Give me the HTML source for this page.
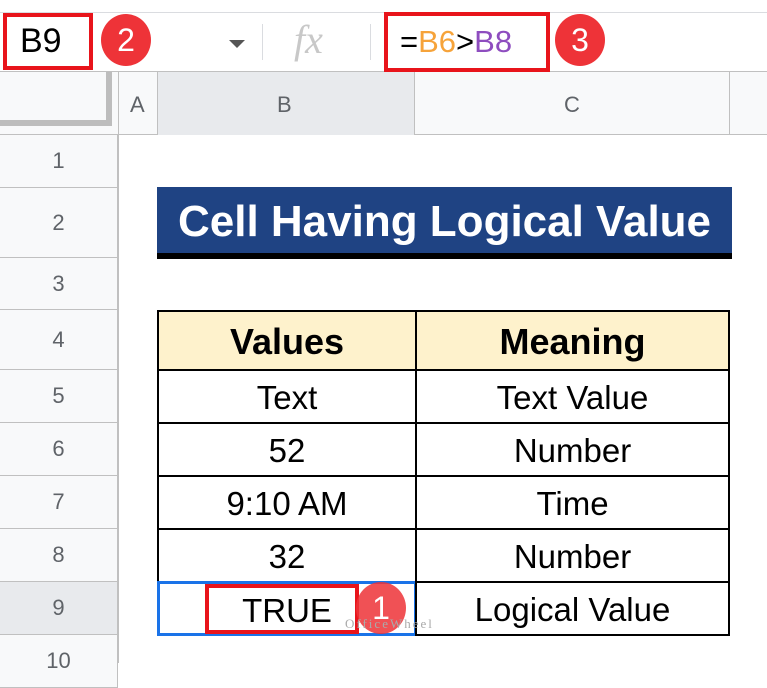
<!DOCTYPE html>
<html><head><style>
*{margin:0;padding:0;box-sizing:border-box}
body{width:767px;height:663px;background:#fff;position:relative;overflow:hidden;font-family:"Liberation Sans",Arial,sans-serif}
.a{position:absolute}
.rn{position:absolute;left:0;width:118px;background:#f8f9fa;border-bottom:1px solid #c0c0c0;border-right:1px solid #c0c0c0;text-align:center;color:#5f6368;font-size:22px}
.cell{position:absolute;border:2px solid #000;text-align:center;font-size:33px;color:#000;white-space:nowrap}
.badge{position:absolute;width:50px;height:52px;border-radius:50%;background:#ee3338;color:#fff;font-size:32px;text-align:center;line-height:52px}
</style></head><body>
<div class="a" style="left:0;top:12px;width:767px;height:1px;background:#dadce0"></div>
<div class="a" style="left:0;top:71px;width:767px;height:1px;background:#c0c0c0"></div>
<div class="a" style="left:3px;top:13px;width:90px;height:57px;border:4px solid #e8141b"></div>
<div class="a" style="left:20px;top:22px;font-size:34px;color:#000">B9</div>
<div class="badge" style="left:101px;top:14px">2</div>
<div class="a" style="left:229px;top:40px;width:0;height:0;border-left:8px solid transparent;border-right:8px solid transparent;border-top:8px solid #555"></div>
<div class="a" style="left:262px;top:24px;width:1px;height:36px;background:#dadce0"></div>
<div class="a" style="left:294px;top:16px;font-size:40px;color:#c8c8c8;font-family:'Liberation Serif',serif;font-style:italic">fx</div>
<div class="a" style="left:370px;top:24px;width:1px;height:36px;background:#dadce0"></div>
<div class="a" style="left:384px;top:12px;width:166px;height:60px;border:4px solid #e8141b"></div>
<div class="a" style="left:400px;top:24px;font-size:31px"><span style="color:#000">=</span><span style="color:#f6a33a">B6</span><span>&gt;</span><span style="color:#8e4dbf">B8</span></div>
<div class="badge" style="left:555px;top:14px">3</div>
<div class="a" style="left:0;top:72px;width:767px;height:63px;background:#f8f9fa;border-bottom:1px solid #c0c0c0"></div>
<div class="a" style="left:0;top:72px;width:112px;height:54px;border-right:6px solid #bdbdbd;border-bottom:6px solid #bdbdbd;background:#f8f9fa"></div>
<div class="a" style="left:118px;top:72px;width:1px;height:591px;background:#c0c0c0"></div>
<div class="a" style="left:157px;top:72px;width:258px;height:63px;background:#e8eaed;border-left:1px solid #c0c0c0;border-right:1px solid #c0c0c0"></div>
<div class="a" style="left:729px;top:72px;width:1px;height:63px;background:#c0c0c0"></div>
<div class="a" style="left:130px;top:92px;font-size:22px;color:#5f6368">A</div>
<div class="a" style="left:277px;top:92px;font-size:22px;color:#5f6368">B</div>
<div class="a" style="left:564px;top:92px;font-size:22px;color:#5f6368">C</div>
<div class="rn" style="top:135px;height:53px;line-height:52px">1</div>
<div class="rn" style="top:188px;height:70px;line-height:70px">2</div>
<div class="rn" style="top:258px;height:52px;line-height:52px">3</div>
<div class="rn" style="top:310px;height:60px;line-height:60px">4</div>
<div class="rn" style="top:370px;height:53px;line-height:52px">5</div>
<div class="rn" style="top:423px;height:53px;line-height:52px">6</div>
<div class="rn" style="top:476px;height:53px;line-height:52px">7</div>
<div class="rn" style="top:529px;height:53px;line-height:52px">8</div>
<div class="rn" style="top:582px;height:53px;line-height:52px;background:#e8eaed">9</div>
<div class="rn" style="top:635px;height:53px;line-height:52px">10</div>
<div class="a" style="left:157px;top:187px;width:575px;height:66px;background:#1f4383;color:#fff;font-weight:bold;font-size:44px;text-align:center;line-height:70px;white-space:nowrap">Cell Having Logical Value</div>
<div class="a" style="left:157px;top:253px;width:575px;height:6px;background:#000"></div>
<div class="cell" style="left:157px;top:310px;width:260px;height:61px;background:#fef2cc;font-weight:bold;font-size:36px;line-height:60px">Values</div>
<div class="cell" style="left:415px;top:310px;width:315px;height:61px;background:#fef2cc;font-weight:bold;font-size:36px;line-height:60px">Meaning</div>
<div class="cell" style="left:157px;top:369px;width:260px;height:55px;line-height:54px">Text</div>
<div class="cell" style="left:415px;top:369px;width:315px;height:55px;line-height:54px">Text Value</div>
<div class="cell" style="left:157px;top:422px;width:260px;height:55px;line-height:54px">52</div>
<div class="cell" style="left:415px;top:422px;width:315px;height:55px;line-height:54px">Number</div>
<div class="cell" style="left:157px;top:475px;width:260px;height:55px;line-height:54px">9:10 AM</div>
<div class="cell" style="left:415px;top:475px;width:315px;height:55px;line-height:54px">Time</div>
<div class="cell" style="left:157px;top:528px;width:260px;height:55px;line-height:54px">32</div>
<div class="cell" style="left:415px;top:528px;width:315px;height:55px;line-height:54px">Number</div>
<div class="cell" style="left:157px;top:581px;width:260px;height:55px;line-height:54px;border:3px solid #1a73e8">TRUE</div>
<div class="cell" style="left:415px;top:581px;width:315px;height:55px;line-height:54px">Logical Value</div>
<div class="a" style="left:205px;top:584px;width:154px;height:50px;border:4px solid #e8141b"></div>
<div class="badge" style="left:356px;top:582px;opacity:.85">1</div>
<div class="a" style="left:345px;top:616px;font-size:13px;color:#aaa;font-family:'Liberation Serif',serif;letter-spacing:2px">OfficeWheel</div>
</body></html>
